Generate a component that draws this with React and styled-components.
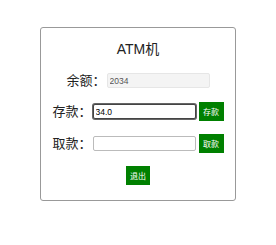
import React, { useState } from "react";
import styled, { createGlobalStyle } from "styled-components";

const GlobalStyle = createGlobalStyle`
  body {
    margin: 0;
    background: #fff;
    font-family: "Liberation Sans", "Noto Sans CJK SC", Arial, sans-serif;
  }
`;

const Page = styled.div`
  width: 276px;
  height: 245px;
  padding-top: 27px;
  box-sizing: border-box;
`;

const Card = styled.div`
  width: 196px;
  height: 174px;
  margin-left: 40px;
  box-sizing: border-box;
  border: 1px solid #999;
  border-radius: 3px;
  padding-top: 12px;
  display: flex;
  flex-direction: column;
  align-items: center;
`;

const Title = styled.div`
  font-size: 14px;
  color: #222;
  line-height: 18px;
  margin-bottom: 13px;
`;

const Row = styled.div`
  display: flex;
  align-items: center;
  height: 19px;
  margin-bottom: ${(p) => p.gap}px;
`;

const Label = styled.span`
  font-size: 13px;
  line-height: 19px;
  color: #222;
  margin-right: 1px;
`;

const Input = styled.input`
  width: 103px;
  height: 15px;
  box-sizing: border-box;
  padding: 0 2px;
  font-size: 8.5px;
  font-family: "Liberation Sans", Arial, sans-serif;
  border: 1px solid ${(p) => (p.focused ? "#444" : "#bbb")};
  box-shadow: ${(p) => (p.focused ? "0 0 0 1px #666" : "none")};
  border-radius: 2px;
  outline: none;
  background: ${(p) => (p.disabled ? "#f4f4f4" : "#fff")};
  color: ${(p) => (p.disabled ? "#555" : "#000")};
  ${(p) => (p.disabled ? "border-color: #e6e6e6;" : "")}
`;

const Button = styled.button`
  background: #008000;
  color: #fff;
  border: none;
  padding: 0;
  width: 25px;
  height: 19px;
  font-size: 8px;
  font-family: "Noto Sans CJK SC", sans-serif;
  margin-left: 3px;
`;

const ExitButton = styled(Button)`
  width: 24px;
  margin-left: 0;
`;

export default function App() {
  const [dep, setDep] = useState("34.0");
  const [wd, setWd] = useState("");
  return (
    <Page>
      <GlobalStyle />
      <Card>
        <Title>ATM机</Title>
        <Row gap={12}>
          <Label>余额：</Label>
          <Input disabled value="2034" readOnly />
        </Row>
        <Row gap={13}>
          <Label>存款：</Label>
          <Input focused value={dep} onChange={(e) => setDep(e.target.value)} />
          <Button>存款</Button>
        </Row>
        <Row gap={13}>
          <Label>取款：</Label>
          <Input value={wd} onChange={(e) => setWd(e.target.value)} />
          <Button>取款</Button>
        </Row>
        <ExitButton>退出</ExitButton>
      </Card>
    </Page>
  );
}
